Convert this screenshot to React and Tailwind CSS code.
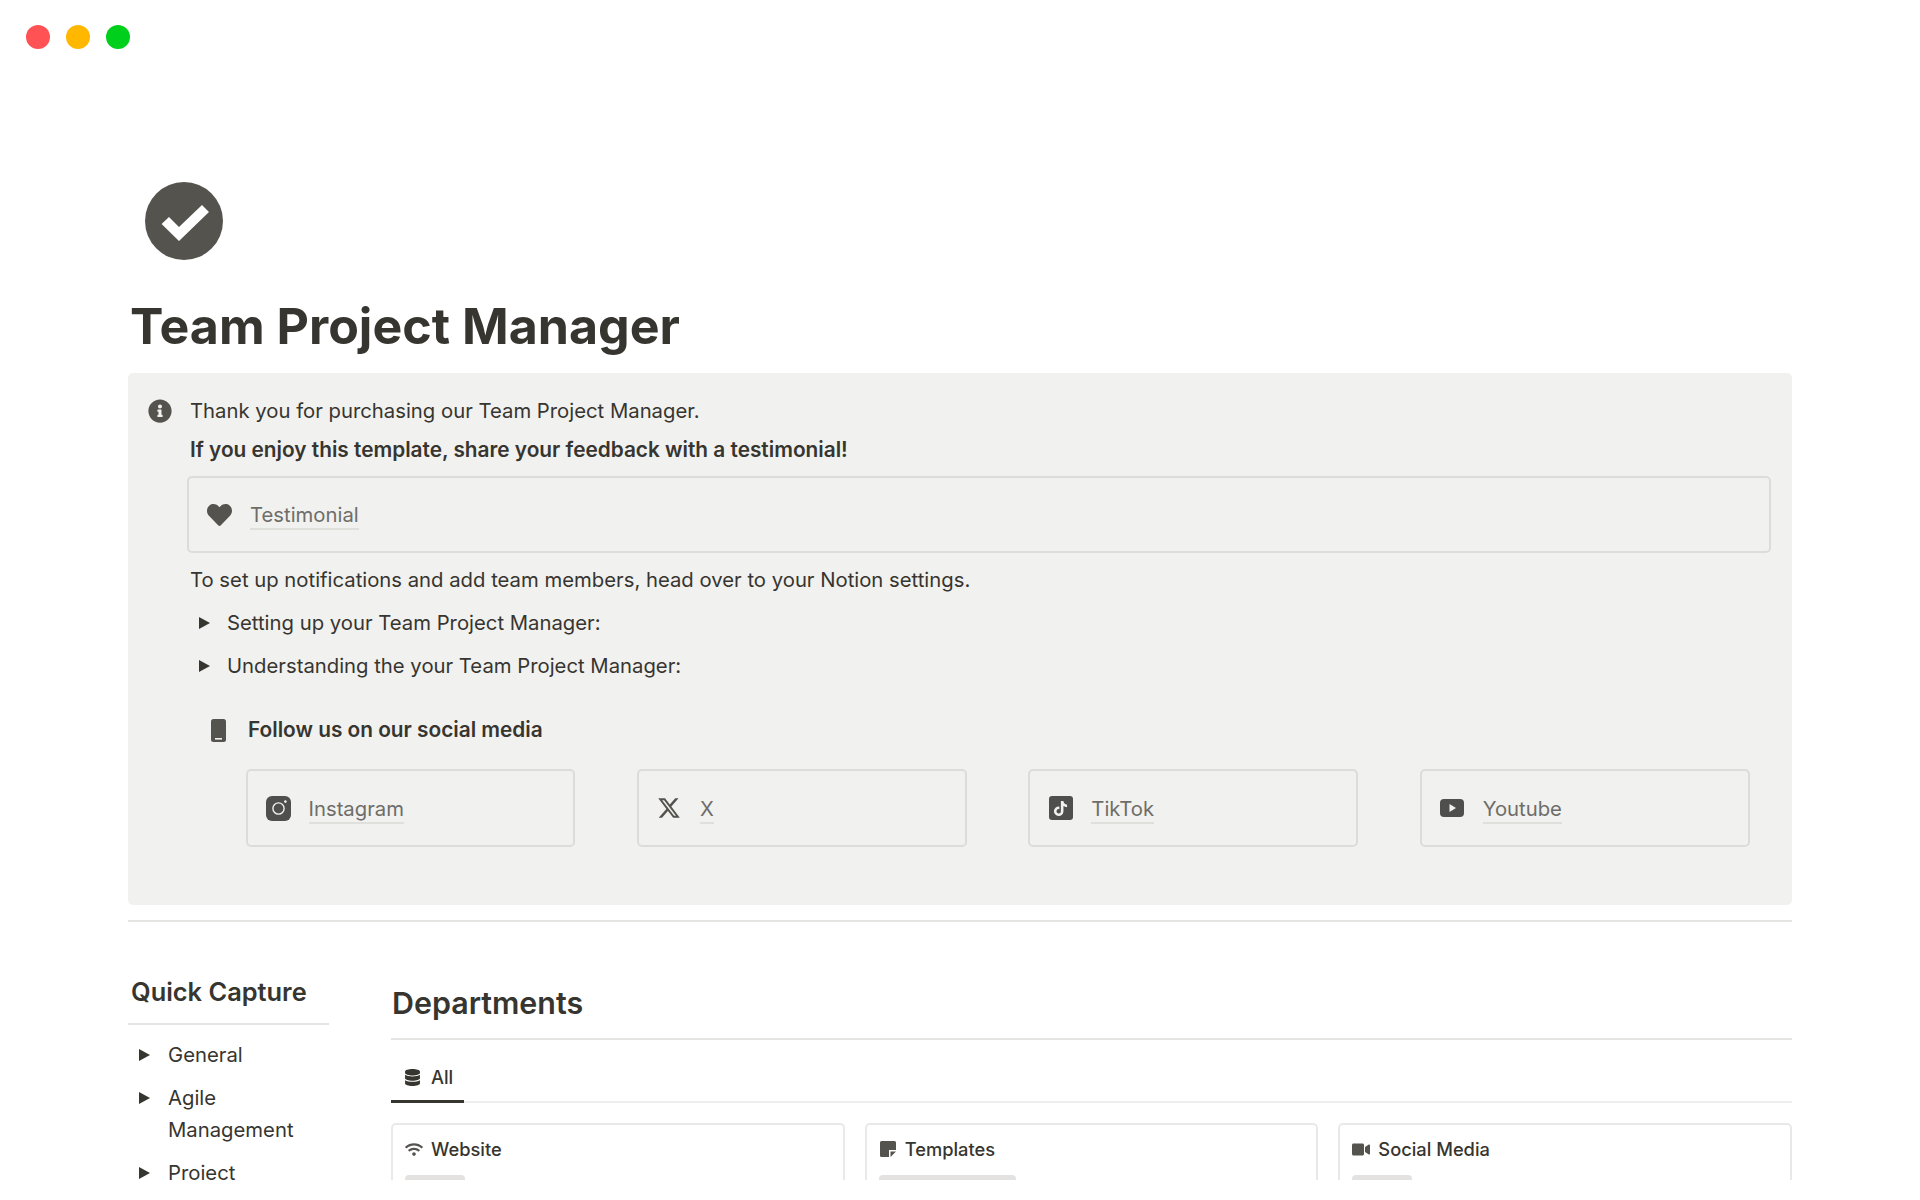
import React from "react";
import { FaDatabase, FaHeart, FaInfoCircle, FaTiktok, FaVideo, FaWifi } from "react-icons/fa";
import { FaXTwitter } from "react-icons/fa6";

const CheckIcon = () => (
  <svg viewBox="0 0 78 78" className="h-[78px] w-[78px]">
    <circle cx="39" cy="39" r="39" fill="#55534e" />
    <polygon points="16.6,42 24,35 34,45 57,23 64,30 34,59" fill="#fff" />
  </svg>
);

const InstagramIcon = () => (
  <svg viewBox="0 0 25 25" className="h-[25px] w-[25px]">
    <rect width="25" height="25" rx="6" fill="#4f4f4d" />
    <circle cx="12.5" cy="12.5" r="5.6" fill="none" stroke="#f1f1ef" strokeWidth="1.4" />
    <circle cx="19.4" cy="5.6" r="1.3" fill="#f1f1ef" />
  </svg>
);

const TiktokIcon = () => (
  <div className="flex h-[24px] w-[24px] items-center justify-center rounded-[3px] bg-[#4f4f4d] text-[#f1f1ef]">
    <FaTiktok size={15} />
  </div>
);

const YoutubeIcon = () => (
  <svg viewBox="0 0 24 18" className="h-[18px] w-[24px]">
    <rect width="24" height="18" rx="4" fill="#4f4f4d" />
    <path d="M9.5 5l6.5 4-6.5 4z" fill="#f1f1ef" />
  </svg>
);

const PhoneIcon = () => (
  <svg viewBox="0 0 15 23" className="h-[23px] w-[15px]">
    <rect width="15" height="23" rx="2.5" fill="#55534e" />
    <rect x="4" y="19" width="7" height="1.6" fill="#f1f1ef" />
  </svg>
);

const NoteIcon = () => (
  <svg viewBox="0 0 16 16" className="h-[16px] w-[16px]">
    <path d="M0 1.5Q0 0 1.5 0h13Q16 0 16 1.5V9h-7v7H1.5Q0 16 0 14.5z" fill="#55534e" />
    <path d="M10.5 10.5H16L10.5 16z" fill="#55534e" />
  </svg>
);

const Triangle = () => <div className="h-0 w-0 shrink-0 border-y-[6px] border-l-[11px] border-y-transparent border-l-[#37352f]" />;

const Toggle = ({ children }) => (
  <div className="mt-[11px] flex items-center gap-[17px] pl-[12px]">
    <Triangle />
    <span>{children}</span>
  </div>
);

const LinkBox = ({ icon, label, className }) => (
  <div className={`flex items-center rounded-[5px] border-2 border-[#dcdcd9] pl-[18px] ${className}`}>
    <div className="flex w-[25px] shrink-0 justify-center text-[#55534e]">{icon}</div>
    <span className="ml-[18px] border-b-2 border-[#dfdfdc] pt-[2px] leading-[27px] text-[#6e6d69]">{label}</span>
  </div>
);

const SideItem = ({ children }) => (
  <div className="mt-[11px] flex gap-[17px] pl-[11px]">
    <div className="pt-[10px]">
      <Triangle />
    </div>
    <span className="pl-[1px]">{children}</span>
  </div>
);

const Card = ({ icon, label, pill }) => (
  <div className="h-[100px] rounded-t-[5px] border-2 border-b-0 border-[#e9e9e7] px-[12px] pt-[10px]">
    <div className="flex h-[28px] items-center gap-[8px] text-[18.3px] font-medium">
      <div className="flex w-[18px] justify-center text-[#55534e]">{icon}</div>
      <span>{label}</span>
    </div>
    <div className={`mt-[12px] h-[30px] rounded-[4px] bg-[#e3e2e0] ${pill}`} />
  </div>
);

export default function App() {
  return (
    <div className="h-[1200px] bg-white [font-family:Inter,sans-serif] text-[20.3px] leading-[32px] text-[#37352f]">
      <div className="h-[1180px] overflow-hidden">
        <div className="flex gap-[16px] pl-[26px] pt-[25px]">
          <div className="h-[24px] w-[24px] rounded-full bg-[#ff5254]" />
          <div className="h-[24px] w-[24px] rounded-full bg-[#ffb700]" />
          <div className="h-[24px] w-[24px] rounded-full bg-[#00cf1c]" />
        </div>

        <div className="px-[128px]">
          <div className="ml-[17px] mt-[133px]">
            <CheckIcon />
          </div>
          <h1 className="ml-[2px] mt-[36px] text-[50.1px] font-bold leading-[60px]">Team Project Manager</h1>

          <div className="mt-[17px] flex h-[532px] gap-[15.5px] rounded-[5px] bg-[#f1f1ef] pl-[19.5px] pr-[21px] pt-[22px]">
            <div className="pt-[4px] text-[#55534e]">
              <FaInfoCircle size={24} />
            </div>
            <div className="min-w-0 flex-1">
              <p className="pl-[3px]">Thank you for purchasing our Team Project Manager.</p>
              <p className="mt-[7px] pl-[3px] text-[20.8px] font-semibold">If you enjoy this template, share your feedback with a testimonial!</p>
              <LinkBox className="mt-[10px] h-[77px]" icon={<FaHeart size={28} />} label="Testimonial" />
              <p className="mt-[11px] pl-[3px]">To set up notifications and add team members, head over to your Notion settings.</p>
              <Toggle>Setting up your Team Project Manager:</Toggle>
              <Toggle>Understanding the your Team Project Manager:</Toggle>
              <div className="mt-[32px] flex items-center gap-[22px] pl-[24px] text-[20.8px] font-semibold">
                <PhoneIcon />
                <span>Follow us on our social media</span>
              </div>
              <div className="ml-[58.5px] mr-[21.5px] mt-[23px] grid grid-cols-4 gap-x-[61.6px]">
                <LinkBox className="h-[78px]" icon={<InstagramIcon />} label="Instagram" />
                <LinkBox className="h-[78px]" icon={<FaXTwitter size={24} />} label="X" />
                <LinkBox className="h-[78px]" icon={<TiktokIcon />} label="TikTok" />
                <LinkBox className="h-[78px]" icon={<YoutubeIcon />} label="Youtube" />
              </div>
            </div>
          </div>

          <div className="mt-[15px] h-[2px] bg-[#e4e4e2]" />

          <div className="flex gap-[62px]">
            <div className="w-[201px] shrink-0 pt-[54px]">
              <h3 className="pl-[3px] text-[25.4px] font-semibold">Quick Capture</h3>
              <div className="mb-[14px] mt-[15px] h-[2px] bg-[#e4e4e2]" />
              <SideItem>General</SideItem>
              <SideItem>Agile Management</SideItem>
              <SideItem>Project</SideItem>
            </div>

            <div className="min-w-0 flex-1 pt-[61px]">
              <h2 className="pl-[1px] text-[30.4px] font-semibold leading-[40px]">Departments</h2>
              <div className="mt-[15px] h-[2px] bg-[#e4e4e2]" />
              <div className="flex h-[63px] border-b-2 border-[#eeeeec]">
                <div className="-mb-[2px] flex h-[63px] w-[73px] items-center gap-[10px] border-b-[3px] border-[#37352f] pl-[13px] pt-[14px] text-[18.3px] font-medium">
                  <FaDatabase size={17} />
                  <span>All</span>
                </div>
              </div>
              <div className="mt-[20px] grid grid-cols-3 gap-[20px]">
                <Card icon={<FaWifi size={19} />} label="Website" pill="w-[60px]" />
                <Card icon={<NoteIcon />} label="Templates" pill="w-[137px]" />
                <Card icon={<FaVideo size={19} />} label="Social Media" pill="w-[60px]" />
              </div>
            </div>
          </div>
        </div>
      </div>
    </div>
  );
}
